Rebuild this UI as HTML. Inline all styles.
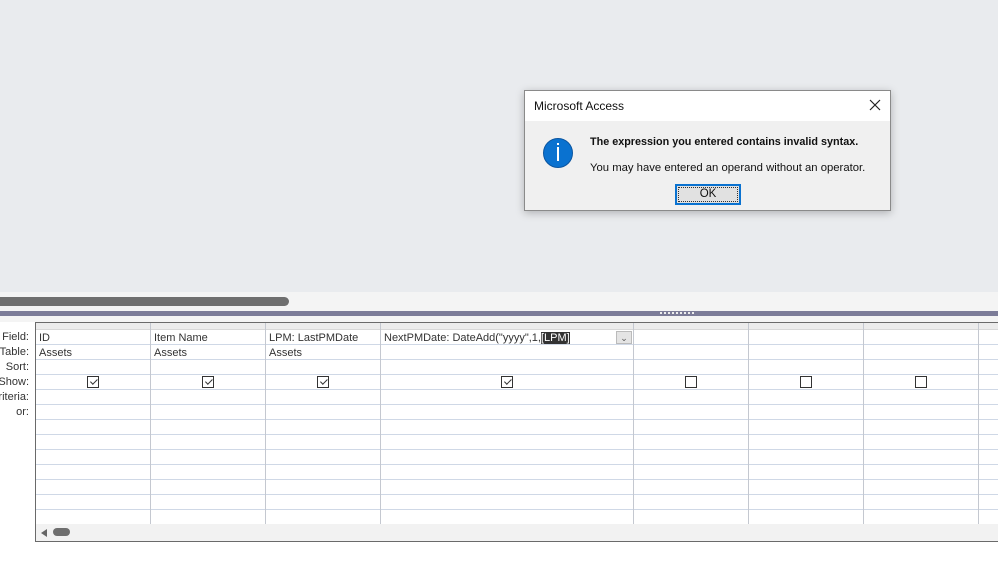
<!DOCTYPE html>
<html><head><style>
*{margin:0;padding:0;box-sizing:border-box}
body{width:998px;height:568px;position:relative;overflow:hidden;background:#fff;font-family:"Liberation Sans",sans-serif;font-size:11px;color:#222}
.a{position:absolute}
.hl{position:absolute;left:36px;right:0;height:1px;background:#cfd8e6}
.vl{position:absolute;top:323px;height:201px;width:1px;background:#c4c8d0}
.lab{position:absolute;right:969px;font-size:11px;color:#333;text-align:right;white-space:nowrap}
.cb{position:absolute;width:12px;height:12px;border:1px solid #333;background:#fff}
.ck::after{content:"";position:absolute;width:6px;height:3px;border-left:1px solid #333;border-bottom:1px solid #333;transform:rotate(-45deg);transform-origin:0 0;top:5px;left:2px}
.t{position:absolute;font-size:11px;color:#333;white-space:nowrap}
</style></head><body>
<div class="a" style="left:0;top:0;width:998px;height:292px;background:#e9ebee"></div>
<div class="a" style="left:0;top:292px;width:998px;height:19px;background:#f4f4f4"></div>
<div class="a" style="left:0;top:297px;width:289px;height:9px;background:#6f6f6f;border-radius:0 5px 5px 0"></div>
<div class="a" style="left:0;top:311px;width:998px;height:5px;background:#7c7c98"></div>
<div class="a" style="left:660px;top:312px;width:34px;height:2px;border-top:2px dotted #eee"></div>
<div class="a" style="left:0;top:316px;width:998px;height:6px;background:#f4f4f4"></div>
<div class="a" style="left:35px;top:322px;width:963px;height:220px;border:1px solid #6a6a6a;border-right:none;background:#fff"></div>
<div class="a" style="left:36px;top:323px;width:962px;height:6px;background:#ececec"></div>
<div class="a" style="left:36px;top:524px;width:962px;height:17px;background:#f2f2f2"></div>
<div class="a" style="left:41px;top:529px;width:0;height:0;border-top:4px solid transparent;border-bottom:4px solid transparent;border-right:6px solid #666"></div>
<div class="a" style="left:53px;top:528px;width:17px;height:8px;background:#6f6f6f;border-radius:4px"></div>
<div class="hl" style="top:329px;background:#d8d8d8"></div>
<div class="hl" style="top:344px"></div><div class="hl" style="top:359px"></div><div class="hl" style="top:374px"></div>
<div class="hl" style="top:389px"></div><div class="hl" style="top:404px"></div><div class="hl" style="top:419px"></div>
<div class="hl" style="top:434px"></div><div class="hl" style="top:449px"></div><div class="hl" style="top:464px"></div>
<div class="hl" style="top:479px"></div><div class="hl" style="top:494px"></div><div class="hl" style="top:509px"></div>
<div class="vl" style="left:150px"></div><div class="vl" style="left:265px"></div><div class="vl" style="left:380px"></div>
<div class="vl" style="left:633px"></div><div class="vl" style="left:748px"></div><div class="vl" style="left:863px"></div><div class="vl" style="left:978px"></div>
<div class="lab" style="top:331px">Field:</div>
<div class="lab" style="top:346px">Table:</div>
<div class="lab" style="top:361px">Sort:</div>
<div class="lab" style="top:376px">Show:</div>
<div class="lab" style="top:391px">Criteria:</div>
<div class="lab" style="top:406px">or:</div>
<div class="t" style="left:39px;top:332px">ID</div>
<div class="t" style="left:154px;top:332px">Item Name</div>
<div class="t" style="left:269px;top:332px">LPM: LastPMDate</div>
<div class="t" style="left:384px;top:332px">NextPMDate: DateAdd("yyyy",1,<span style="background:#333;color:#fff">[LPM]</span></div>
<div class="a" style="left:616px;top:331px;width:16px;height:13px;background:#e4e4e4;border:1px solid #bbb;font-size:9px;text-align:center;line-height:12px;color:#555">⌄</div>
<div class="t" style="left:39px;top:347px">Assets</div>
<div class="t" style="left:154px;top:347px">Assets</div>
<div class="t" style="left:269px;top:347px">Assets</div>
<div class="cb ck" style="left:87px;top:376px"></div>
<div class="cb ck" style="left:202px;top:376px"></div>
<div class="cb ck" style="left:317px;top:376px"></div>
<div class="cb ck" style="left:501px;top:376px"></div>
<div class="cb" style="left:685px;top:376px"></div>
<div class="cb" style="left:800px;top:376px"></div>
<div class="cb" style="left:915px;top:376px"></div>
<!-- dialog -->
<div class="a" style="left:524px;top:90px;width:367px;height:121px;background:#f0f0f0;border:1px solid #8a8a8a;box-shadow:0 2px 8px rgba(0,0,0,.25)">
<div class="a" style="left:0;top:0;width:365px;height:30px;background:#fff"></div>
<div class="a" style="left:9px;top:8px;font-size:12px;color:#111">Microsoft Access</div>
<svg class="a" style="left:344px;top:8px" width="12" height="12" viewBox="0 0 12 12"><path d="M1 1L11 11M11 1L1 11" stroke="#222" stroke-width="1.2"/></svg>
<div class="a" style="left:18px;top:47px;width:30px;height:30px;border-radius:50%;background:#0a72d0;border:1px solid #0a55a0"></div>
<div class="a" style="left:32px;top:56px;width:2px;height:14px;background:#fff"></div>
<div class="a" style="left:32px;top:52px;width:2px;height:2px;background:#fff"></div>
<div class="a" style="left:65px;top:45px;font-size:10.8px;font-weight:bold;color:#111">The expression you entered contains invalid syntax.</div>
<div class="a" style="left:65px;top:71px;font-size:11.3px;color:#111">You may have entered an operand without an operator.</div>
<div class="a" style="left:150px;top:93px;width:66px;height:21px;border:2px solid #0a72d0;background:#e1e1e1;text-align:center;line-height:17px;font-size:11.5px;color:#111"><div style="position:absolute;left:1px;top:1px;right:1px;bottom:1px;border:1px dotted #333"></div>OK</div>
</div>
</body></html>
